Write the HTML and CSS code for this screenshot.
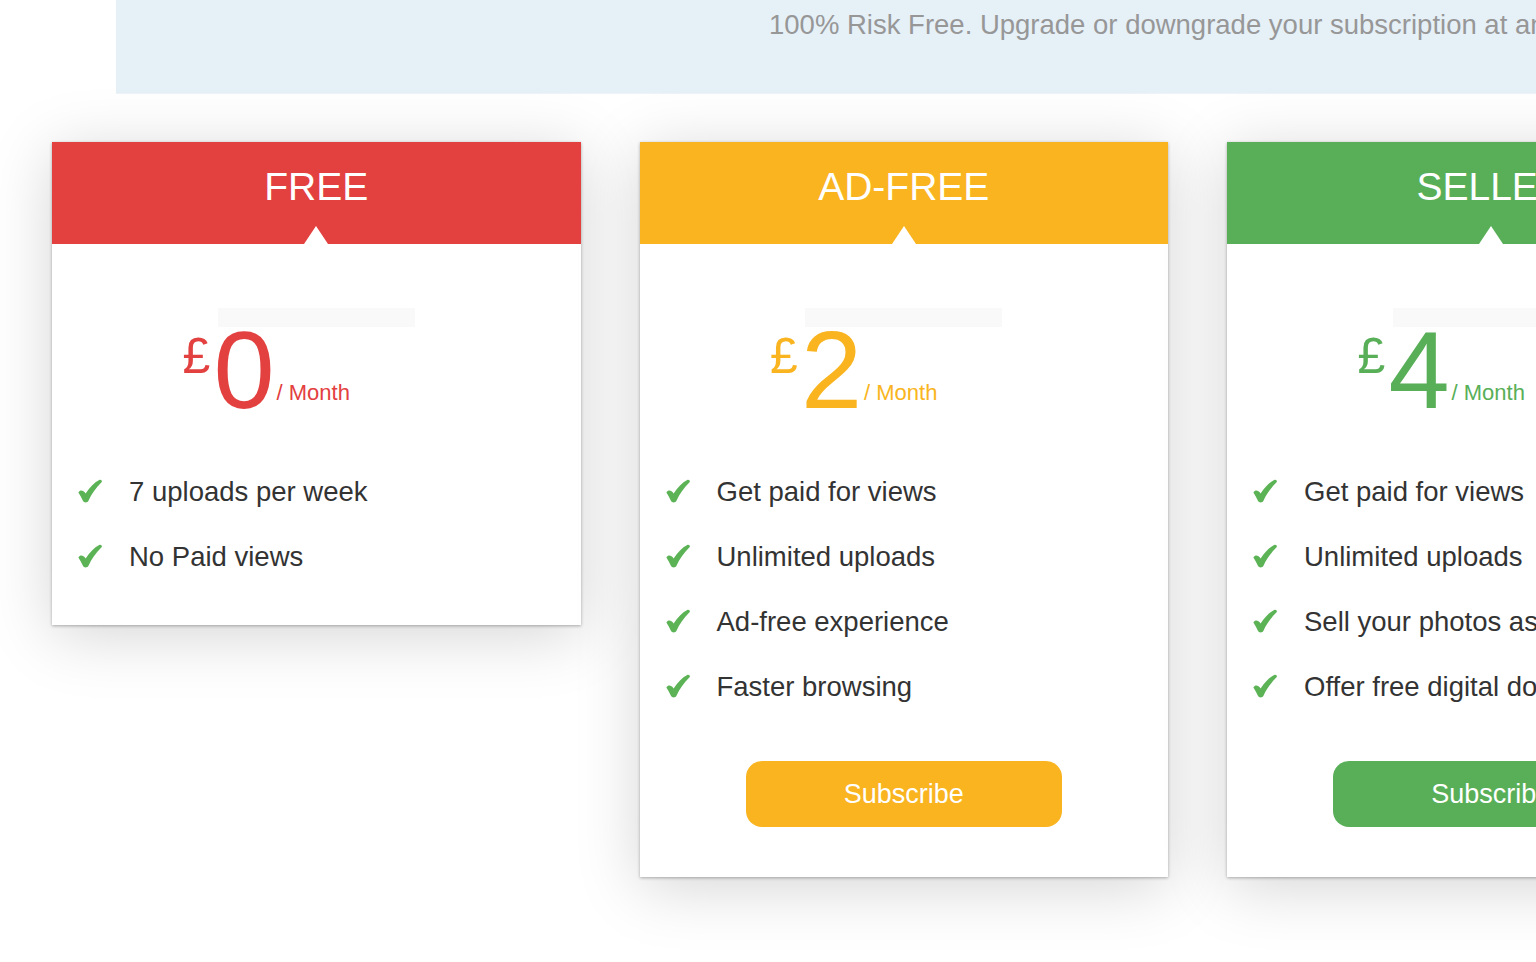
FILE: index.html
```html
<!DOCTYPE html>
<html lang="en">
<head>
<meta charset="utf-8">
<title>Pricing</title>
<link rel="stylesheet" href="styles.css">
</head>
<body>
<div class="page">
  <section class="banner">
    <p class="banner-sub">100% Risk Free. Upgrade or downgrade your subscription at any time</p>
  </section>

  <section class="plans">
    <article class="plan plan-red">
      <header class="plan-head"><h2 class="plan-title">FREE</h2></header>
      <div class="plan-body">
        <div class="price-bar"></div>
        <div class="price"><span class="cur">£</span><span class="num">0</span><span class="per">/ Month</span></div>
        <ul class="features">
          <li class="feature"><svg class="check" viewBox="0 0 24 24"><path d="M0.4 13.4C2.4 10.6 5.2 11.2 7.6 14.4 11.6 8.4 16.2 3.4 21.2 0.9 23.2 0 24.8 2.1 23.3 3.6 17.8 9.2 13.4 15.4 10.6 21.4 9.3 24 6.1 24 4.9 21.7 3.5 18.6 2.1 15.8 0.4 13.4Z"/></svg><span>7 uploads per week</span></li>
          <li class="feature"><svg class="check" viewBox="0 0 24 24"><path d="M0.4 13.4C2.4 10.6 5.2 11.2 7.6 14.4 11.6 8.4 16.2 3.4 21.2 0.9 23.2 0 24.8 2.1 23.3 3.6 17.8 9.2 13.4 15.4 10.6 21.4 9.3 24 6.1 24 4.9 21.7 3.5 18.6 2.1 15.8 0.4 13.4Z"/></svg><span>No Paid views</span></li>
        </ul>
      </div>
    </article>

    <article class="plan plan-yellow">
      <header class="plan-head"><h2 class="plan-title">AD-FREE</h2></header>
      <div class="plan-body">
        <div class="price-bar"></div>
        <div class="price"><span class="cur">£</span><span class="num">2</span><span class="per">/ Month</span></div>
        <ul class="features">
          <li class="feature"><svg class="check" viewBox="0 0 24 24"><path d="M0.4 13.4C2.4 10.6 5.2 11.2 7.6 14.4 11.6 8.4 16.2 3.4 21.2 0.9 23.2 0 24.8 2.1 23.3 3.6 17.8 9.2 13.4 15.4 10.6 21.4 9.3 24 6.1 24 4.9 21.7 3.5 18.6 2.1 15.8 0.4 13.4Z"/></svg><span>Get paid for views</span></li>
          <li class="feature"><svg class="check" viewBox="0 0 24 24"><path d="M0.4 13.4C2.4 10.6 5.2 11.2 7.6 14.4 11.6 8.4 16.2 3.4 21.2 0.9 23.2 0 24.8 2.1 23.3 3.6 17.8 9.2 13.4 15.4 10.6 21.4 9.3 24 6.1 24 4.9 21.7 3.5 18.6 2.1 15.8 0.4 13.4Z"/></svg><span>Unlimited uploads</span></li>
          <li class="feature"><svg class="check" viewBox="0 0 24 24"><path d="M0.4 13.4C2.4 10.6 5.2 11.2 7.6 14.4 11.6 8.4 16.2 3.4 21.2 0.9 23.2 0 24.8 2.1 23.3 3.6 17.8 9.2 13.4 15.4 10.6 21.4 9.3 24 6.1 24 4.9 21.7 3.5 18.6 2.1 15.8 0.4 13.4Z"/></svg><span>Ad-free experience</span></li>
          <li class="feature"><svg class="check" viewBox="0 0 24 24"><path d="M0.4 13.4C2.4 10.6 5.2 11.2 7.6 14.4 11.6 8.4 16.2 3.4 21.2 0.9 23.2 0 24.8 2.1 23.3 3.6 17.8 9.2 13.4 15.4 10.6 21.4 9.3 24 6.1 24 4.9 21.7 3.5 18.6 2.1 15.8 0.4 13.4Z"/></svg><span>Faster browsing</span></li>
        </ul>
        <button class="btn" type="button">Subscribe</button>
      </div>
    </article>

    <article class="plan plan-green">
      <header class="plan-head"><h2 class="plan-title">SELLER</h2></header>
      <div class="plan-body">
        <div class="price-bar"></div>
        <div class="price"><span class="cur">£</span><span class="num">4</span><span class="per">/ Month</span></div>
        <ul class="features">
          <li class="feature"><svg class="check" viewBox="0 0 24 24"><path d="M0.4 13.4C2.4 10.6 5.2 11.2 7.6 14.4 11.6 8.4 16.2 3.4 21.2 0.9 23.2 0 24.8 2.1 23.3 3.6 17.8 9.2 13.4 15.4 10.6 21.4 9.3 24 6.1 24 4.9 21.7 3.5 18.6 2.1 15.8 0.4 13.4Z"/></svg><span>Get paid for views</span></li>
          <li class="feature"><svg class="check" viewBox="0 0 24 24"><path d="M0.4 13.4C2.4 10.6 5.2 11.2 7.6 14.4 11.6 8.4 16.2 3.4 21.2 0.9 23.2 0 24.8 2.1 23.3 3.6 17.8 9.2 13.4 15.4 10.6 21.4 9.3 24 6.1 24 4.9 21.7 3.5 18.6 2.1 15.8 0.4 13.4Z"/></svg><span>Unlimited uploads</span></li>
          <li class="feature"><svg class="check" viewBox="0 0 24 24"><path d="M0.4 13.4C2.4 10.6 5.2 11.2 7.6 14.4 11.6 8.4 16.2 3.4 21.2 0.9 23.2 0 24.8 2.1 23.3 3.6 17.8 9.2 13.4 15.4 10.6 21.4 9.3 24 6.1 24 4.9 21.7 3.5 18.6 2.1 15.8 0.4 13.4Z"/></svg><span>Sell your photos as prints</span></li>
          <li class="feature"><svg class="check" viewBox="0 0 24 24"><path d="M0.4 13.4C2.4 10.6 5.2 11.2 7.6 14.4 11.6 8.4 16.2 3.4 21.2 0.9 23.2 0 24.8 2.1 23.3 3.6 17.8 9.2 13.4 15.4 10.6 21.4 9.3 24 6.1 24 4.9 21.7 3.5 18.6 2.1 15.8 0.4 13.4Z"/></svg><span>Offer free digital downloads</span></li>
        </ul>
        <button class="btn" type="button">Subscribe</button>
      </div>
    </article>
  </section>
</div>
</body>
</html>
```

FILE: styles.css
```css
* { box-sizing: border-box; }

html, body {
  margin: 0;
  padding: 0;
  background: #ffffff;
  overflow: hidden;
}

body {
  font-family: "Liberation Sans", Arial, Helvetica, sans-serif;
  width: 1536px;
  height: 962px;
}

.page {
  width: 1536px;
  height: 962px;
  overflow: hidden;
}

.banner {
  margin-left: 116px;
  height: 94px;
  background: #e6f0f7;
  border-bottom: 1px solid #edf3f8;
  padding: 8px 0 0 653px;
  overflow: hidden;
}

.banner-sub {
  margin: 0;
  font-size: 27.5px;
  line-height: 33px;
  color: #979797;
  white-space: nowrap;
}

.plans {
  display: flex;
  align-items: flex-start;
  gap: 59px;
  margin-top: 48px;
  padding-left: 52px;
}

.plan {
  flex: 0 0 528.5px;
  background: #ffffff;
  box-shadow: 0 1px 3px rgba(0, 0, 0, 0.3), 0 10px 60px rgba(0, 0, 0, 0.17);
}

.plan-head {
  position: relative;
  height: 102px;
  padding-top: 21px;
  text-align: center;
}

.plan-head::after {
  content: "";
  position: absolute;
  left: 50%;
  bottom: 0;
  margin-left: -12px;
  border-left: 12px solid transparent;
  border-right: 12px solid transparent;
  border-bottom: 18px solid #ffffff;
}

.plan-title {
  margin: 0;
  font-size: 39px;
  line-height: 47px;
  font-weight: 400;
  color: #ffffff;
  white-space: nowrap;
}

.plan-body {
  padding-bottom: 36px;
}

.price-bar {
  width: 197px;
  height: 19px;
  margin: 64px auto 0;
  background: #f9f9f9;
}

.price {
  font-size: 108px;
  line-height: 86px;
  text-align: center;
  padding-right: 100px;
  white-space: nowrap;
}

.cur {
  font-size: 50px;
  line-height: 50px;
  vertical-align: 35px;
}

.num {
  font-size: 110px;
  margin-left: 3px;
}

.per {
  font-size: 22px;
  line-height: 22px;
  vertical-align: 8px;
  margin-left: 2px;
}

.features {
  list-style: none;
  margin: 45px 0 0;
  padding: 0 0 0 26px;
}

.feature {
  display: flex;
  align-items: center;
  gap: 27px;
  height: 65px;
  font-size: 27.5px;
  color: #333333;
  white-space: nowrap;
}

.check {
  width: 24px;
  height: 24px;
  flex: 0 0 24px;
  fill: #5cb356;
  margin-top: -1px;
}

.btn {
  display: block;
  width: 316px;
  height: 66px;
  margin: 42px auto 14px;
  border: none;
  border-radius: 16px;
  font-family: inherit;
  font-size: 27px;
  color: #ffffff;
  cursor: pointer;
}

.plan-red .plan-head { background: #e34040; }
.plan-red .price { color: #e34040; }

.plan-yellow .plan-head { background: #f9b420; }
.plan-yellow .price { color: #f9b420; }
.plan-yellow .btn { background: #f9b420; }

.plan-green .plan-head { background: #58af58; }
.plan-green .price { color: #58af58; }
.plan-green .btn { background: #58af58; }
```
